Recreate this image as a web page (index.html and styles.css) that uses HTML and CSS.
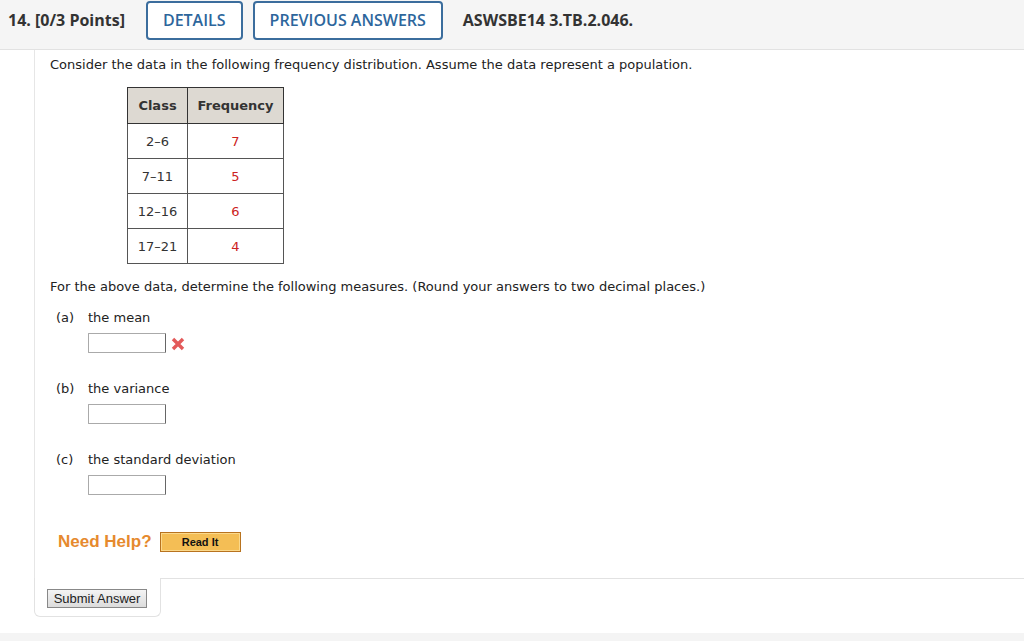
FILE: index.html
```html
<!DOCTYPE html>
<html lang="en">
<head>
    <meta charset="UTF-8">
    <title>Question 14</title>
    <link rel="stylesheet" href="styles.css">
</head>
<body>
    <div class="question-header">
        <span class="question-number">14. [0/3 Points]</span>
        <button class="header-button">DETAILS</button>
        <button class="header-button">PREVIOUS ANSWERS</button>
        <span class="question-code">ASWSBE14 3.TB.2.046.</span>
    </div>

    <div class="question-body">
        <p class="prompt">Consider the data in the following frequency distribution. Assume the data represent a population.</p>

        <table class="freq-table">
            <tr>
                <th class="col-class">Class</th>
                <th class="col-freq">Frequency</th>
            </tr>
            <tr><td>2&ndash;6</td><td class="given">7</td></tr>
            <tr><td>7&ndash;11</td><td class="given">5</td></tr>
            <tr><td>12&ndash;16</td><td class="given">6</td></tr>
            <tr><td>17&ndash;21</td><td class="given">4</td></tr>
        </table>

        <p class="prompt instructions">For the above data, determine the following measures. (Round your answers to two decimal places.)</p>

        <div class="parts">
            <div class="part">
                <div class="part-label"><span class="part-letter">(a)</span>the mean</div>
                <div class="answer">
                    <input type="text" class="answer-box">
                    <svg class="wrong-mark" width="14" height="14" viewBox="0 0 14 14">
                        <path d="M2 2 L12 12 M12 2 L2 12" stroke="#e35a5a" stroke-width="3.4" stroke-linecap="butt"/>
                    </svg>
                </div>
            </div>
            <div class="part">
                <div class="part-label"><span class="part-letter">(b)</span>the variance</div>
                <div class="answer">
                    <input type="text" class="answer-box">
                </div>
            </div>
            <div class="part">
                <div class="part-label"><span class="part-letter">(c)</span>the standard deviation</div>
                <div class="answer">
                    <input type="text" class="answer-box">
                </div>
            </div>
        </div>

        <div class="help">
            <span class="need-help">Need Help?</span>
            <span class="read-it">Read It</span>
        </div>
    </div>

    <div class="submit-row">
        <div class="submit-tab">
            <button class="submit-button">Submit Answer</button>
        </div>
        <div class="submit-fill"></div>
    </div>

    <div class="page-foot"></div>
</body>
</html>
```

FILE: styles.css
```css
* {
    margin: 0;
    padding: 0;
    box-sizing: border-box;
}

body {
    background: #fff;
    font-family: "DejaVu Sans", Verdana, sans-serif;
    font-size: 13px;
    color: #222;
}

.question-header {
    display: flex;
    align-items: center;
    height: 50px;
    padding: 0 0 10px 8px;
    background: #f5f5f5;
    border-bottom: 1px solid #e2e2e2;
    font-family: "Open Sans", sans-serif;
    font-weight: 700;
    font-size: 16px;
    color: #333;
}

.question-number {
    margin-right: 21px;
}

.header-button {
    height: 39px;
    margin-top: 1px;
    margin-right: 10px;
    padding: 0 15px;
    background: #fff;
    border: 2px solid #3b6d9d;
    border-radius: 4px;
    font-family: "Open Sans", sans-serif;
    font-weight: 600;
    font-size: 16px;
    color: #2d669c;
}

.question-code {
    margin-left: 10px;
}

.question-body {
    margin-left: 34px;
    padding: 7px 0 26px 15px;
    border-left: 1px solid #e6e6e6;
}

.prompt {
    line-height: 16px;
}

.freq-table {
    margin: 14px 0 0 77px;
    border-collapse: collapse;
    border: 1px solid #333;
    text-align: center;
    color: #333;
}

.freq-table th {
    height: 36px;
    background: #ddd9d2;
    border: 1px solid #333;
    font-weight: bold;
}

.freq-table td {
    height: 35px;
    border: 1px solid #555;
}

.col-class {
    width: 60px;
}

.col-freq {
    width: 96px;
}

.freq-table .given {
    color: #cc2222;
}

.instructions {
    margin-top: 15px;
}

.parts {
    margin-top: 15px;
    padding-left: 6px;
}

.part {
    height: 71px;
}

.part-label {
    line-height: 16px;
}

.part-letter {
    display: inline-block;
    width: 32px;
}

.answer {
    display: flex;
    align-items: center;
    margin: 7px 0 0 32px;
}

.answer-box {
    width: 78px;
    height: 20px;
    border: 1px solid #aaa;
    border-right-color: #666;
    border-radius: 1px;
    background: #fff;
}

.wrong-mark {
    margin-left: 5px;
    margin-top: 2px;
}

.help {
    display: flex;
    align-items: center;
    margin-top: 9px;
    padding-left: 8px;
}

.need-help {
    font-family: "Liberation Sans", Arial, sans-serif;
    font-weight: bold;
    font-size: 17px;
    color: #e68a2e;
    margin-right: 8px;
}

.read-it {
    width: 81px;
    height: 20px;
    line-height: 18px;
    text-align: center;
    background: #f4be55;
    border: 1px solid #b8731f;
    box-shadow: inset 0 0 0 1px #fbd98c;
    font-family: "Liberation Sans", Arial, sans-serif;
    font-weight: bold;
    font-size: 11px;
    color: #111;
}

.submit-row {
    display: flex;
}

.submit-tab {
    width: 127px;
    height: 39px;
    margin-left: 34px;
    padding: 11px 0 0 12px;
    border: 1px solid #e2e2e2;
    border-top: none;
    border-radius: 0 0 6px 6px;
}

.submit-button {
    width: 100px;
    height: 19px;
    background: linear-gradient(#f4f4f4, #dcdcdc);
    border: 1px solid #888;
    font-family: "Liberation Sans", Arial, sans-serif;
    font-size: 13px;
    color: #222;
}

.submit-fill {
    flex: 1;
    border-top: 1px solid #e2e2e2;
}

.page-foot {
    height: 9px;
    margin-top: 16px;
    background: #f4f4f4;
}
```
